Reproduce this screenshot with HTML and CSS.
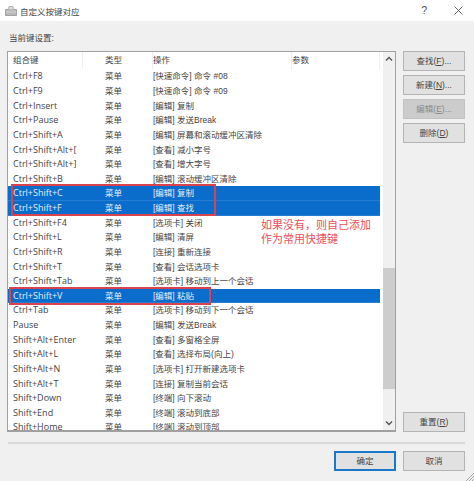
FILE: index.html
```html
<!doctype html>
<html lang="zh-CN">
  <head>
    <meta charset="utf-8">
    <title>自定义按键对应</title>
    <link rel="stylesheet" href="styles.css">
  </head>
  <body>
    <div class="titlebar">
      <svg class="app-icon" width="12" height="10" viewBox="0 0 12 10">
        <path d="M0.5 3.5h11v6h-11z" fill="#b9b9b9" stroke="#a2a2a2"/>
        <path d="M3 3.5l1-3h4l1 3" fill="#d9d9d9" stroke="#b5b5b5"/>
        <path d="M1 6h10" stroke="#d6d6d6"/>
      </svg>
      <span class="title">自定义按键对应</span>
      <span class="help">?</span>
      <svg class="close" width="9" height="9" viewBox="0 0 9 9">
        <path d="M0.5 0.5l8 8M8.5 0.5l-8 8" stroke="#666" stroke-width="1" fill="none"/>
      </svg>
    </div>

    <div class="dialog">
      <div class="caption">当前键设置:</div>
      <div class="content">
        <div class="list">
          <div class="rows">
            <div class="row head">
              <span class="cell key">组合键</span><span class="cell type">类型</span><span class="cell action">操作</span><span class="cell param">参数</span>
            </div>
            <div class="row"><span class="key">Ctrl+F8</span><span class="type">菜单</span><span class="action">[快速命令] 命令 #08</span></div>
            <div class="row"><span class="key">Ctrl+F9</span><span class="type">菜单</span><span class="action">[快速命令] 命令 #09</span></div>
            <div class="row"><span class="key">Ctrl+Insert</span><span class="type">菜单</span><span class="action">[编辑] 复制</span></div>
            <div class="row"><span class="key">Ctrl+Pause</span><span class="type">菜单</span><span class="action">[编辑] 发送Break</span></div>
            <div class="row"><span class="key">Ctrl+Shift+A</span><span class="type">菜单</span><span class="action">[编辑] 屏幕和滚动缓冲区清除</span></div>
            <div class="row"><span class="key">Ctrl+Shift+Alt+[</span><span class="type">菜单</span><span class="action">[查看] 减小字号</span></div>
            <div class="row"><span class="key">Ctrl+Shift+Alt+]</span><span class="type">菜单</span><span class="action">[查看] 增大字号</span></div>
            <div class="row"><span class="key">Ctrl+Shift+B</span><span class="type">菜单</span><span class="action">[编辑] 滚动缓冲区清除</span></div>
            <div class="row selected"><span class="key">Ctrl+Shift+C</span><span class="type">菜单</span><span class="action">[编辑] 复制</span></div>
            <div class="row selected"><span class="key">Ctrl+Shift+F</span><span class="type">菜单</span><span class="action">[编辑] 查找</span></div>
            <div class="row"><span class="key">Ctrl+Shift+F4</span><span class="type">菜单</span><span class="action">[选项卡] 关闭</span></div>
            <div class="row"><span class="key">Ctrl+Shift+L</span><span class="type">菜单</span><span class="action">[编辑] 清屏</span></div>
            <div class="row"><span class="key">Ctrl+Shift+R</span><span class="type">菜单</span><span class="action">[连接] 重新连接</span></div>
            <div class="row"><span class="key">Ctrl+Shift+T</span><span class="type">菜单</span><span class="action">[查看] 会话选项卡</span></div>
            <div class="row"><span class="key">Ctrl+Shift+Tab</span><span class="type">菜单</span><span class="action">[选项卡] 移动到上一个会话</span></div>
            <div class="row selected"><span class="key">Ctrl+Shift+V</span><span class="type">菜单</span><span class="action">[编辑] 粘贴</span></div>
            <div class="row"><span class="key">Ctrl+Tab</span><span class="type">菜单</span><span class="action">[选项卡] 移动到下一个会话</span></div>
            <div class="row"><span class="key">Pause</span><span class="type">菜单</span><span class="action">[编辑] 发送Break</span></div>
            <div class="row"><span class="key">Shift+Alt+Enter</span><span class="type">菜单</span><span class="action">[查看] 多窗格全屏</span></div>
            <div class="row"><span class="key">Shift+Alt+L</span><span class="type">菜单</span><span class="action">[查看] 选择布局(向上)</span></div>
            <div class="row"><span class="key">Shift+Alt+N</span><span class="type">菜单</span><span class="action">[选项卡] 打开新建选项卡</span></div>
            <div class="row"><span class="key">Shift+Alt+T</span><span class="type">菜单</span><span class="action">[连接] 复制当前会话</span></div>
            <div class="row"><span class="key">Shift+Down</span><span class="type">菜单</span><span class="action">[终端] 向下滚动</span></div>
            <div class="row"><span class="key">Shift+End</span><span class="type">菜单</span><span class="action">[终端] 滚动到底部</span></div>
            <div class="row"><span class="key">Shift+Home</span><span class="type">菜单</span><span class="action">[终端] 滚动到顶部</span></div>
          </div>
          <div class="scrollbar">
            <svg width="12" height="14" viewBox="0 0 12 14"><path d="M3 8.5l3-3 3 3" stroke="#555" stroke-width="1.4" fill="none"/></svg>
            <div class="track"><div class="thumb"></div></div>
            <svg width="12" height="14" viewBox="0 0 12 14"><path d="M3 5.5l3 3 3-3" stroke="#555" stroke-width="1.4" fill="none"/></svg>
          </div>
        </div>
        <div class="side">
          <button class="btn" type="button">查找(<u>F</u>)...</button>
          <button class="btn" type="button">新建(<u>N</u>)...</button>
          <button class="btn disabled" type="button">编辑(<u>E</u>)...</button>
          <button class="btn" type="button">删除(<u>D</u>)</button>
          <button class="btn reset" type="button">重置(<u>R</u>)</button>
        </div>
      </div>
      <div class="separator"></div>
      <div class="footer">
        <button class="btn default" type="button">确定</button>
        <button class="btn" type="button">取消</button>
      </div>
    </div>

    <div class="mark mark-one"></div>
    <div class="mark mark-two"></div>
    <div class="note">如果没有，则自己添加<br>作为常用快捷键</div>
    <svg class="grip" width="9" height="9" viewBox="0 0 9 9">
      <path d="M9 1L1 9M9 4L4 9M9 7L7 9" stroke="#a8a8a8" fill="none"/>
    </svg>
  </body>
</html>
```

FILE: styles.css
```css
body {
  margin: 0;
  width: 474px;
  height: 481px;
  overflow: hidden;
  position: relative;
  background: #f0f0f0;
  color: #444;
  font-family: "Liberation Sans", "Noto Sans CJK SC", sans-serif;
  font-size: 8.5px;
}

.titlebar {
  height: 21px;
  background: #fff;
  display: flex;
  align-items: center;
  padding-left: 5px;
}

.title {
  margin-left: 3px;
}

.help {
  margin-left: auto;
  margin-right: 27px;
  font-size: 10px;
}

.close {
  margin-right: 11px;
}

.dialog {
  padding: 0 9px 0 7px;
}

.caption {
  height: 30px;
  line-height: 34px;
  padding-left: 2px;
}

.content {
  display: flex;
  gap: 7px;
}

.list {
  box-sizing: border-box;
  width: 389px;
  height: 381px;
  background: #fff;
  border: 1px solid #a0a0a0;
  border-bottom-width: 2px;
  display: flex;
  overflow: hidden;
}

.rows {
  width: 372px;
  flex: none;
}

.row {
  display: flex;
  height: 14.625px;
  line-height: 14.625px;
  white-space: nowrap;
}

.row.head {
  height: 17px;
  line-height: 17px;
  margin-bottom: 0.4px;
}

.row.head .cell {
  border-right: 1px solid #eee;
  box-sizing: border-box;
}

.row.head .key {
  font: inherit;
}

.row.selected {
  background: #0a6ccb;
  color: #e6eff9;
  box-shadow: inset 0 -1px 0 rgba(255, 255, 255, 0.12);
}

.key {
  width: 70px;
  margin-left: 5px;
  margin-right: 22px;
  flex: none;
  font-family: "Open Sans", sans-serif;
  font-size: 9px;
}

.type {
  width: 48px;
  flex: none;
}

.action {
  flex: none;
}

.row.head .action {
  width: 139px;
}

.row.head .param {
  width: 92px;
}

.scrollbar {
  margin-left: 3px;
  width: 12px;
  background: #f0f0f0;
  display: flex;
  flex-direction: column;
}

.scrollbar svg {
  flex: none;
}

.track {
  flex: 1;
  padding-top: 202px;
}

.thumb {
  height: 121px;
  background: #cdcdcd;
}

.side {
  width: 62px;
  display: flex;
  flex-direction: column;
  gap: 4px;
}

.btn {
  box-sizing: border-box;
  width: 62px;
  height: 20px;
  padding: 0;
  background: #e1e1e1;
  border: 1px solid #b4b4b4;
  color: #444;
  font: inherit;
  line-height: 16px;
}

.btn.disabled {
  background: #cccccc;
  border-color: #c2c2c2;
  color: #8a8a8a;
}

.btn.reset {
  margin-top: auto;
}

.btn.default {
  border: 2px solid #1b78c8;
}

.separator {
  height: 2px;
  margin: 10px 0 0 1px;
  background: #d8d8d8;
}

.footer {
  display: flex;
  justify-content: flex-end;
  gap: 7px;
  margin-top: 7px;
}

/* annotations on top of the screenshot */
.mark {
  position: absolute;
  box-sizing: border-box;
  border: 2px solid #d9434e;
}

.mark-one {
  left: 11px;
  top: 184px;
  width: 205px;
  height: 32px;
}

.mark-two {
  left: 9px;
  top: 287px;
  width: 202px;
  height: 18px;
}

.note {
  position: absolute;
  left: 261px;
  top: 217px;
  color: #e9505c;
  font-family: "Noto Sans CJK SC", sans-serif;
  font-size: 11px;
  line-height: 14px;
}

.grip {
  position: absolute;
  right: 0;
  bottom: 0;
}
```
